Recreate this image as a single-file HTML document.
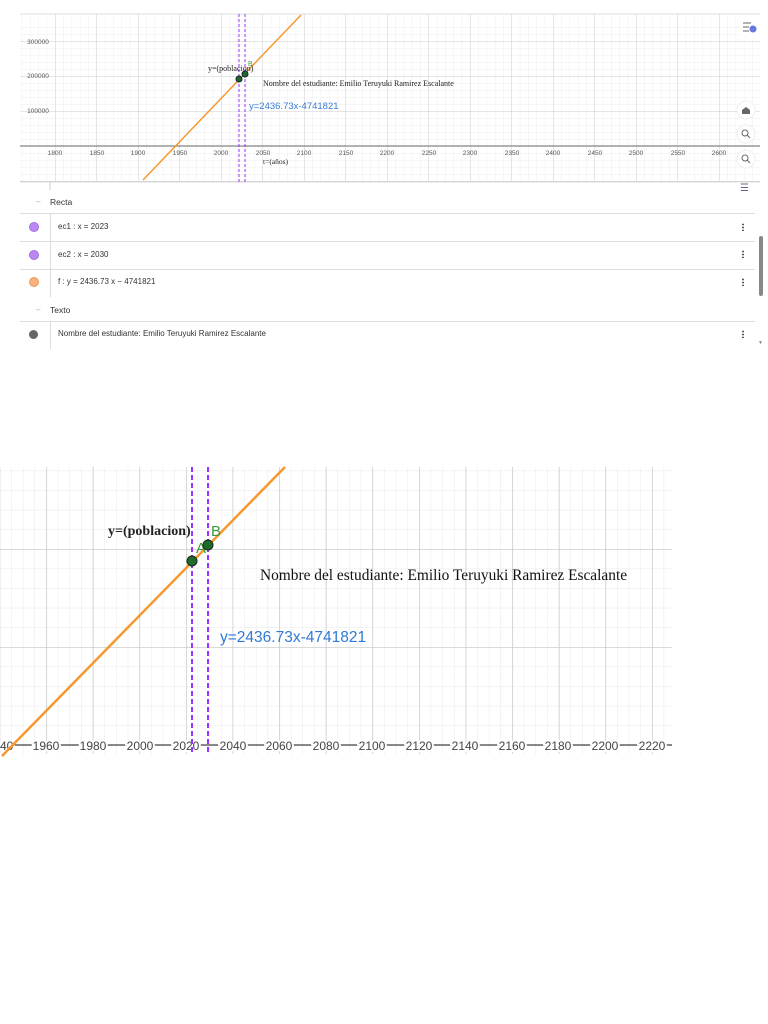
<!DOCTYPE html>
<html><head><meta charset="utf-8"><style>
body{margin:0;width:768px;height:1024px;background:#fff;position:relative;overflow:hidden;font-family:"Liberation Sans",sans-serif}
.a{position:absolute}
.row{position:absolute;left:20px;width:735px;border-top:1px solid #ddd;height:27px}
.t{position:absolute;font-size:8px;color:#333}
.dot{position:absolute;width:10px;height:10px;border-radius:50%}
.menu{position:absolute;left:742px;width:2px;height:8px;background:radial-gradient(circle,#555 0.8px,transparent 1px) 0 0/2px 3px}
</style></head><body>
<svg class="a" style="left:0;top:0" width="768" height="190">
<defs>
<pattern id="m1" patternUnits="userSpaceOnUse" x="55" y="41" width="8.3" height="7"><path d="M0 0V7M0 0H8.3" stroke="#eee" stroke-width="1" fill="none"/></pattern>
<pattern id="M1" patternUnits="userSpaceOnUse" x="55" y="41" width="41.5" height="35"><path d="M0 0V35M0 0H41.5" stroke="#ccc" stroke-width="1" fill="none"/></pattern>
</defs>
<rect x="20" y="14" width="740" height="168" fill="#fff"/>
<rect x="20" y="14" width="740" height="168" fill="url(#m1)"/>
<rect x="20" y="14" width="740" height="168" fill="url(#M1)"/>
<line x1="20" y1="14" x2="760" y2="14" stroke="#ddd"/>
<line x1="20" y1="182" x2="760" y2="182" stroke="#ddd"/>
<line x1="20" y1="146" x2="760" y2="146" stroke="#666"/>
<g font-family="Liberation Sans" font-size="6.5" fill="#555" text-anchor="middle">
<text x="38" y="44">300000</text><text x="38" y="78">200000</text><text x="38" y="113">100000</text>
<text x="55" y="155">1800</text><text x="97" y="155">1850</text><text x="138" y="155">1900</text><text x="180" y="155">1950</text><text x="221" y="155">2000</text><text x="263" y="155">2050</text><text x="304" y="155">2100</text><text x="346" y="155">2150</text><text x="387" y="155">2200</text><text x="429" y="155">2250</text><text x="470" y="155">2300</text><text x="512" y="155">2350</text><text x="553" y="155">2400</text><text x="595" y="155">2450</text><text x="636" y="155">2500</text><text x="678" y="155">2550</text><text x="719" y="155">2600</text>
</g>
<line x1="143" y1="180" x2="301" y2="15" stroke="#f7982e" stroke-width="1.5"/>
<line x1="239" y1="14" x2="239" y2="182" stroke="#9933ff" stroke-dasharray="3,2"/>
<line x1="245" y1="14" x2="245" y2="182" stroke="#9933ff" stroke-dasharray="3,2"/>
<circle cx="239" cy="79" r="3" fill="#1e6b2a" stroke="#123"/>
<circle cx="245" cy="74" r="3" fill="#1e6b2a" stroke="#123"/>
<text x="248" y="66" font-size="7" fill="#4a4">B</text>
<g font-family="Liberation Serif" fill="#222">
<text x="208" y="71" font-size="8">y=(poblacion)</text>
<text x="263" y="86" font-size="8">Nombre del estudiante: Emilio Teruyuki Ramirez Escalante</text>
<text x="263" y="164" font-size="7.5">t=(años)</text>
</g>
<text x="249" y="109" font-size="9.5" fill="#3a7dd6">y=2436.73x-4741821</text>
<rect x="740" y="16" width="20" height="24" fill="#fff" rx="3"/>
<path d="M743 23h8M743 27h6M743 31h6" stroke="#666"/><circle cx="753" cy="29" r="3.5" fill="#6677dd"/>
<circle cx="746" cy="110" r="9" fill="#fff" stroke="#eee"/><path d="M742 114v-4l4-3 4 3v4z" fill="#666"/>
<circle cx="746" cy="134" r="9" fill="#fff" stroke="#eee"/><circle cx="745" cy="133" r="3" fill="none" stroke="#666"/><path d="M747 135l3 3" stroke="#666"/>
<circle cx="746" cy="159" r="9" fill="#fff" stroke="#eee"/><circle cx="745" cy="158" r="3" fill="none" stroke="#666"/><path d="M747 160l3 3" stroke="#666"/>
<line x1="50" y1="182" x2="50" y2="190" stroke="#ccc"/>
</svg>
<div class="t" style="left:36px;top:197px;color:#aaa">–</div>
<div class="t" style="left:50px;top:197px;font-size:8.5px">Recta</div>
<div class="row" style="top:213px"></div>
<div class="row" style="top:241px"></div>
<div class="row" style="top:269px"></div>
<div class="row" style="top:321px;height:28px"></div>
<div class="a" style="left:50px;top:213px;width:1px;height:84px;background:#ddd"></div>
<div class="a" style="left:50px;top:321px;width:1px;height:28px;background:#ddd"></div>
<div class="dot" style="left:29px;top:222px;background:#bb88f3;border:1px solid #a070e0;width:8px;height:8px"></div>
<div class="dot" style="left:29px;top:250px;background:#bb88f3;border:1px solid #a070e0;width:8px;height:8px"></div>
<div class="dot" style="left:29px;top:277px;background:#fbb27c;border:1px solid #e89b60;width:8px;height:8px"></div>
<div class="dot" style="left:29px;top:330px;background:#666;width:9px;height:9px"></div>
<div class="t" style="left:58px;top:222px">ec1 : x = 2023</div>
<div class="t" style="left:58px;top:250px">ec2 : x = 2030</div>
<div class="t" style="left:58px;top:277px">f : y = 2436.73 x − 4741821</div>
<div class="t" style="left:36px;top:305px;color:#aaa">–</div>
<div class="t" style="left:50px;top:305px;font-size:8.5px">Texto</div>
<div class="t" style="left:58px;top:329px">Nombre del estudiante: Emilio Teruyuki Ramirez Escalante</div>
<div class="menu" style="top:223px"></div><div class="menu" style="top:250px"></div><div class="menu" style="top:278px"></div><div class="menu" style="top:330px"></div>
<div class="a" style="left:740px;top:183px;width:20px;height:24px;background:#fff;font-size:10px;color:#668">☰</div>
<div class="a" style="left:759px;top:236px;width:4px;height:60px;background:#888;border-radius:2px"></div>
<div class="a" style="left:758px;top:340px;font-size:5px;color:#888">▼</div>
<svg class="a" style="left:0;top:460px" width="768" height="300" viewBox="0 460 768 300">
<defs>
<pattern id="m2" patternUnits="userSpaceOnUse" x="186" y="549" width="11.65" height="19.6"><path d="M0 0V19.6M0 0H11.65" stroke="#e8e8e8" stroke-width="1" fill="none"/></pattern>
<pattern id="M2" patternUnits="userSpaceOnUse" x="186" y="549" width="46.6" height="98"><path d="M0 0V98M0 0H46.6" stroke="#c4c4c4" stroke-width="1.3" fill="none"/></pattern>
</defs>
<rect x="0" y="467" width="672" height="287" fill="url(#m2)"/>
<rect x="0" y="467" width="672" height="287" fill="url(#M2)"/>
<line x1="0" y1="745" x2="672" y2="745" stroke="#444" stroke-width="1.2"/>
<g font-size="12" fill="#444" stroke="#fff" stroke-width="4" paint-order="stroke" text-anchor="middle">
<text x="0" y="750">1940</text><text x="46" y="750">1960</text><text x="93" y="750">1980</text><text x="140" y="750">2000</text><text x="186" y="750">2020</text><text x="233" y="750">2040</text><text x="279" y="750">2060</text><text x="326" y="750">2080</text><text x="372" y="750">2100</text><text x="419" y="750">2120</text><text x="465" y="750">2140</text><text x="512" y="750">2160</text><text x="558" y="750">2180</text><text x="605" y="750">2200</text><text x="652" y="750">2220</text>
</g>
<line x1="2" y1="756" x2="285" y2="467" stroke="#f7982e" stroke-width="2.5"/>
<line x1="192" y1="467" x2="192" y2="754" stroke="#9933ff" stroke-width="2" stroke-dasharray="5,3"/>
<line x1="208" y1="467" x2="208" y2="754" stroke="#9933ff" stroke-width="2" stroke-dasharray="5,3"/>
<text x="196" y="553" font-size="15" fill="#3d9a3d">A</text>
<text x="211" y="536" font-size="15" fill="#3d9a3d">B</text>
<circle cx="192" cy="561" r="5" fill="#1e6b2a" stroke="#1a2a1a"/>
<circle cx="208" cy="545" r="5" fill="#1e6b2a" stroke="#1a2a1a"/>
<text x="108" y="535" font-family="Liberation Serif" font-size="14" font-weight="bold" fill="#222">y=(poblacion)</text>
<text x="260" y="580" font-family="Liberation Serif" font-size="15.4" fill="#111">Nombre del estudiante: Emilio Teruyuki Ramirez Escalante</text>
<text x="220" y="642" font-size="15.5" fill="#2f7ad6">y=2436.73x-4741821</text>
</svg>
</body></html>
